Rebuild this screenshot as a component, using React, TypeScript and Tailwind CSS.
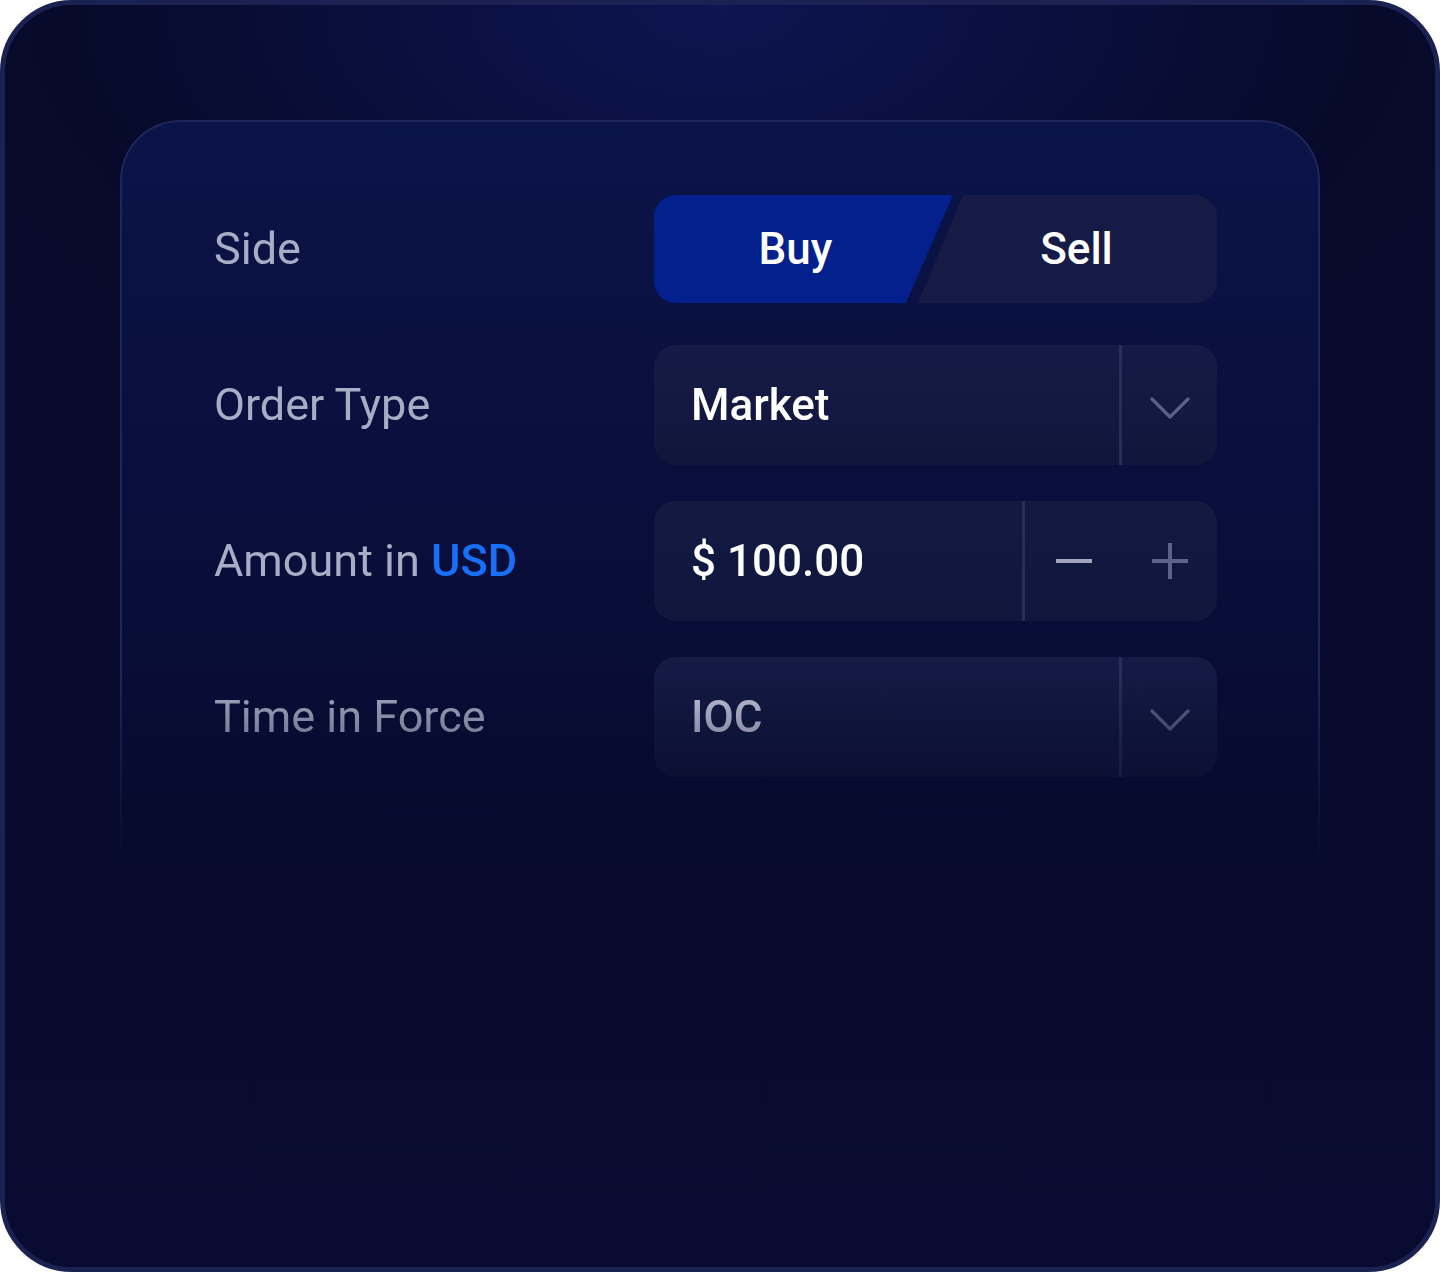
import { useState } from 'react'

const font = { fontFamily: 'Roboto, "Noto Sans", sans-serif' }

function Chevron() {
  return (
    <svg width="40" height="24" viewBox="0 0 40 24" fill="none">
      <path d="M2 3 L20 21 L38 3" stroke="#5b6186" strokeWidth="3.2" strokeLinecap="round" strokeLinejoin="round" />
    </svg>
  )
}

function SelectBox({ value, dim }: { value: string; dim?: boolean }) {
  return (
    <div className="flex h-[120px] w-[563px] overflow-hidden rounded-[22px] bg-gradient-to-b from-[#151b45] to-[#10163b]">
      <div className={`flex flex-1 items-center pl-[37px] text-[44px] font-medium ${dim ? 'text-[#c3c6da]' : 'text-white'}`}>
        {value}
      </div>
      <div className="w-[3px] bg-[#272e5c]" />
      <div className="flex w-[95px] items-center justify-center pt-[6px]">
        <Chevron />
      </div>
    </div>
  )
}

export default function App() {
  const [side, setSide] = useState<'buy' | 'sell'>('buy')
  const [amount, setAmount] = useState(100)

  return (
    <div style={font} className="h-[1272px] w-[1440px] bg-white">
      <div className="relative h-full w-full overflow-hidden rounded-[72px] border-[5px] border-[#1b2252] bg-[radial-gradient(ellipse_65%_40%_at_50%_0%,#0d1552_0%,#070a2a_70%,#080b2d_100%)]">
        {/* top highlight on frame */}
        <div className="absolute left-[200px] right-[200px] top-[-5px] h-[5px] bg-gradient-to-r from-transparent via-[#2c3675] to-transparent" />
        {/* lower background tone */}
        <div className="absolute inset-x-0 bottom-0 h-[500px] bg-gradient-to-b from-transparent to-[#090c30]" />

        <div className="relative px-[115px] pt-[115px]">
          {/* Card */}
          <div className="h-[745px] rounded-t-[60px] border-x-2 border-t-2 border-[#1f2659] bg-gradient-to-b from-[#0b1448] via-[#090f3c] to-[#080b30] px-[92px] pt-[67px] shadow-[0_0_80px_rgba(0,0,0,0.35)] [mask-image:linear-gradient(to_bottom,black_75%,transparent_100%)]">
            <div className="flex flex-col gap-[36px]">
              {/* Side */}
              <div className="flex h-[120px] items-center">
                <div className="w-[440px] text-[45px] text-[#a8adc6]">Side</div>
                <div className="flex h-[108px] w-[563px] overflow-hidden rounded-[22px] text-[44px] font-medium text-white">
                  <button
                    onClick={() => setSide('buy')}
                    className={`flex w-[299px] shrink-0 items-center justify-center pr-[16px] [clip-path:polygon(0_0,299px_0,252px_100%,0_100%)] ${side === 'buy' ? 'bg-[#03208c]' : 'bg-[#161b45]'}`}
                  >
                    Buy
                  </button>
                  <button
                    onClick={() => setSide('sell')}
                    className={`-ml-[35px] flex flex-1 items-center justify-center pl-[18px] [clip-path:polygon(45px_0,100%_0,100%_100%,0_100%)] ${side === 'sell' ? 'bg-[#03208c]' : 'bg-[#161b45]'}`}
                  >
                    Sell
                  </button>
                </div>
              </div>

              {/* Order Type */}
              <div className="flex h-[120px] items-center">
                <div className="w-[440px] text-[45px] text-[#a8adc6]">Order Type</div>
                <SelectBox value="Market" />
              </div>

              {/* Amount */}
              <div className="flex h-[120px] items-center">
                <div className="w-[440px] text-[45px] text-[#a8adc6]">
                  Amount in <span className="font-medium text-[#1670fa]">USD</span>
                </div>
                <div className="flex h-[120px] w-[563px] overflow-hidden rounded-[22px] bg-gradient-to-b from-[#121a42] to-[#10173d]">
                  <div className="flex w-[368px] items-center pl-[37px] text-[44px] font-medium text-white">
                    $ {amount.toFixed(2)}
                  </div>
                  <div className="w-[3px] bg-[#272e5c]" />
                  <button onClick={() => setAmount(Math.max(0, amount - 1))} className="flex w-[97px] items-center justify-center">
                    <svg width="38" height="38" viewBox="0 0 38 38">
                      <path d="M1 19 H37" stroke="#a1a5bd" strokeWidth="4" />
                    </svg>
                  </button>
                  <button onClick={() => setAmount(amount + 1)} className="flex flex-1 items-center justify-center">
                    <svg width="38" height="38" viewBox="0 0 38 38">
                      <path d="M1 19 H37 M19 1 V37" stroke="#5c6388" strokeWidth="4" />
                    </svg>
                  </button>
                </div>
              </div>

              {/* Time in Force */}
              <div className="flex h-[120px] items-center">
                <div className="w-[440px] text-[45px] text-[#a8adc6]">Time in Force</div>
                <SelectBox value="IOC" dim />
              </div>
            </div>
          </div>
        </div>
      </div>
    </div>
  )
}
